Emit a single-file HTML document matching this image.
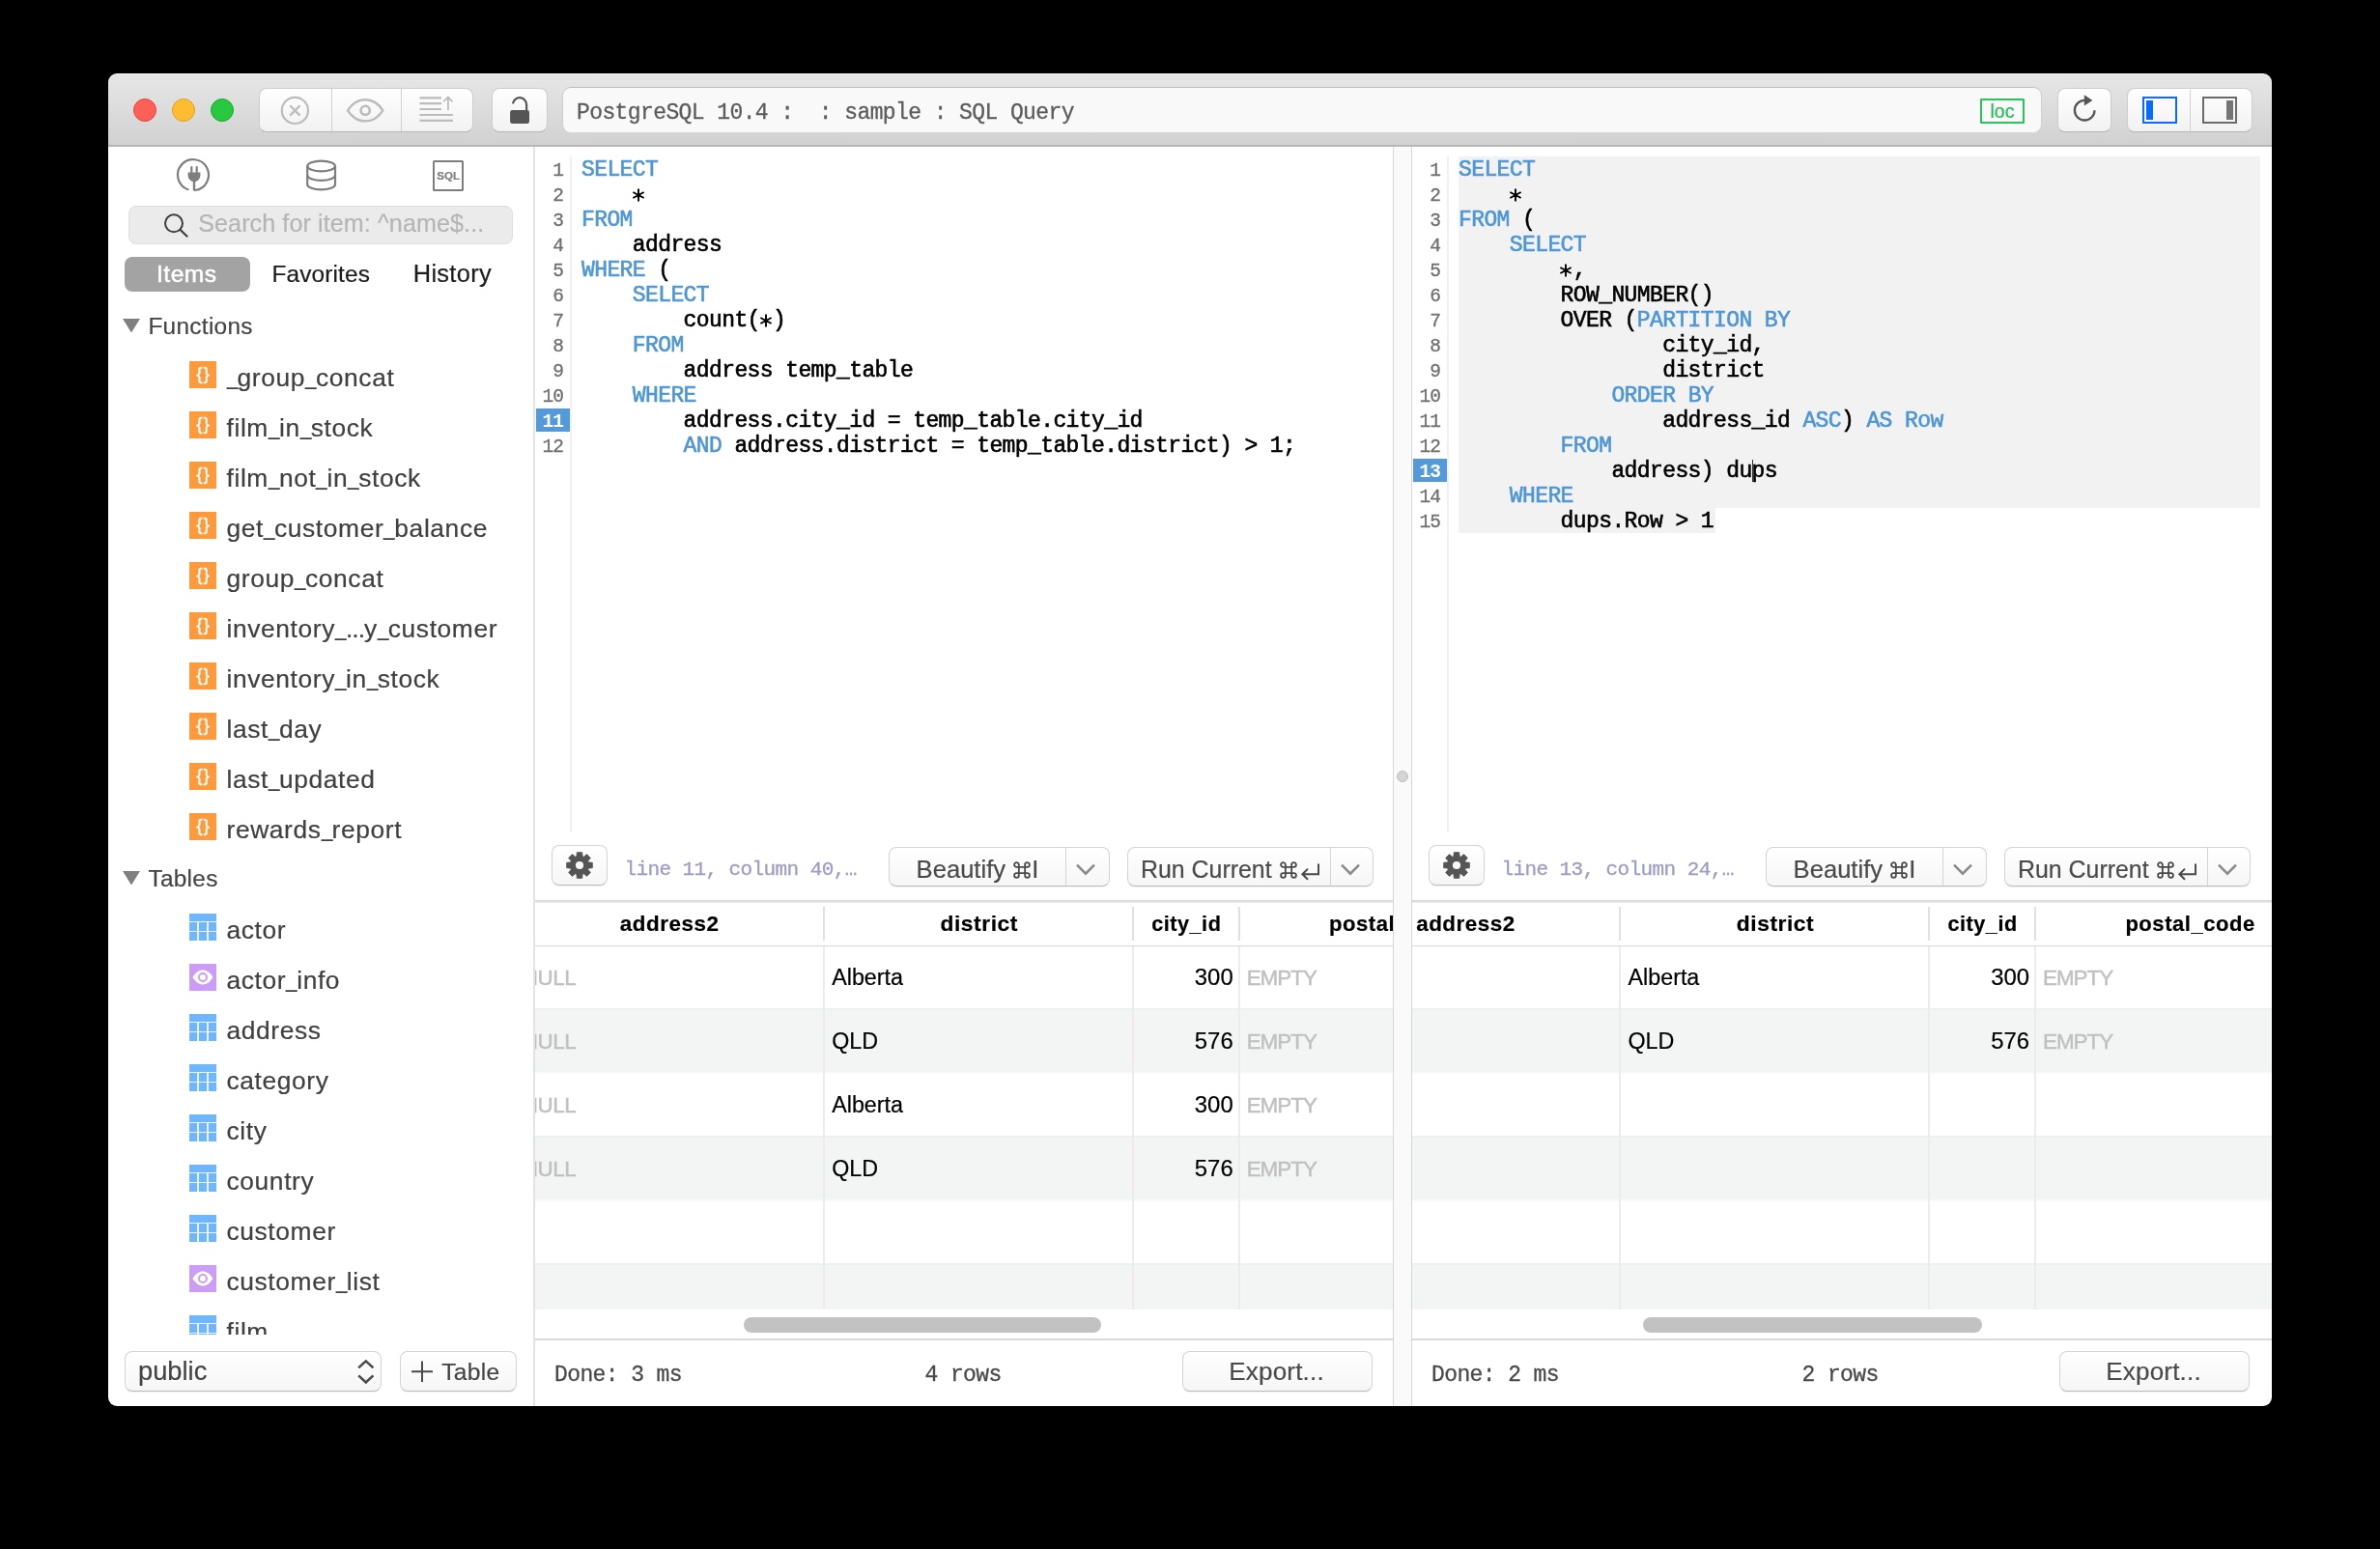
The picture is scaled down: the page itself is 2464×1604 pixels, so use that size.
<!DOCTYPE html>
<html><head><meta charset="utf-8"><title>TablePlus</title>
<style>
html,body{margin:0;padding:0;background:#000;}
html{width:2464px;height:1604px;overflow:hidden;}
body{width:2464px;height:1604px;overflow:hidden;position:relative;}
#win{position:absolute;left:0;top:0;width:2464px;height:1604px;background:#fff;overflow:hidden;
 clip-path:inset(76px 112px 148px 112px round 9px);will-change:transform;}
#win div,#win svg{position:absolute;box-sizing:border-box;}
.t{white-space:pre;line-height:1;}
.fs{font-family:"Liberation Sans",sans-serif;-webkit-text-stroke:0.2px;}
.fm{font-family:"Liberation Mono",monospace;-webkit-text-stroke:0.3px;}
.btn{background:linear-gradient(#fefefe,#f2f2f2);border:1px solid #cdcdcd;border-bottom-color:#b5b5b5;border-radius:8px;}
.btn2{background:linear-gradient(#ffffff,#f6f6f6);border:1px solid #d4d4d4;border-bottom-color:#bcbcbc;border-radius:8px;box-shadow:0 1px 1px rgba(0,0,0,.06);}
.k{color:#4e96d6;}
.u{display:inline-block;width:11px;letter-spacing:0;transform:translateY(-2.4px) scaleX(0.78);transform-origin:0 50%;}
.clip{overflow:hidden;}
</style></head><body><div id="win">
<div style="left:112px;top:76px;width:2240px;height:74px;background:linear-gradient(#e7e7e7,#d1d1d1);"></div>
<div style="left:112px;top:76px;width:2240px;height:1px;background:#f3f3f3;"></div>
<div style="left:112px;top:150px;width:2240px;height:2px;background:#b7b7b7;"></div>
<div style="left:138px;top:102px;width:24px;height:24px;border-radius:50%;background:#fe5f57;border:1px solid #e0443e;"></div>
<div style="left:178px;top:102px;width:24px;height:24px;border-radius:50%;background:#febc2e;border:1px solid #dea123;"></div>
<div style="left:218px;top:102px;width:24px;height:24px;border-radius:50%;background:#28c840;border:1px solid #1aab29;"></div>
<div class="btn" style="left:268px;top:91px;width:222px;height:46px;"></div>
<div style="left:342.5px;top:92px;width:1px;height:44px;background:#d2d2d2;"></div>
<div style="left:414.5px;top:92px;width:1px;height:44px;background:#d2d2d2;"></div>
<svg style="left:288px;top:97px;" width="36" height="36" viewBox="0 0 36 36"><circle cx="17.4" cy="17.4" r="13.6" fill="none" stroke="#bcbcbc" stroke-width="2.2"/><path d="M12.2 12.2l10.4 10.4M22.6 12.2l-10.4 10.4" stroke="#bcbcbc" stroke-width="2.2" fill="none"/></svg>
<svg style="left:358px;top:100px;" width="40" height="28" viewBox="0 0 40 28"><path d="M2 14.3C7 6.5 13 3.2 20.2 3.2S33.4 6.5 38.4 14.3C33.4 22.1 27.4 25.4 20.2 25.4S7 22.1 2 14.3Z" fill="none" stroke="#bcbcbc" stroke-width="2.4"/><circle cx="20.2" cy="14.3" r="4.6" fill="none" stroke="#bcbcbc" stroke-width="2.6"/></svg>
<svg style="left:432px;top:98px;" width="40" height="30" viewBox="0 0 40 30"><path d="M2.5 3.3h22.5M2.5 9.2h22.5M2.5 15h22.5M2.5 21h34.4M2.5 26.8h34.4" stroke="#bcbcbc" stroke-width="2.2" fill="none"/><path d="M31.9 16V3M27.3 7.2l4.6-4.6 4.6 4.6" stroke="#bcbcbc" stroke-width="1.8" fill="none"/></svg>
<div class="btn" style="left:509px;top:91px;width:57.5px;height:46px;"></div>
<svg style="left:524px;top:98px;" width="28" height="32" viewBox="0 0 28 32"><rect x="4.1" y="16" width="19.9" height="14" rx="2.2" fill="#555"/><path d="M21.1 16.5V10.3a7.1 7.1 0 0 0-14.15-0.9" fill="none" stroke="#555" stroke-width="2.2"/></svg>
<div style="left:582px;top:90px;width:1531.5px;height:47.5px;background:#f9f9f9;border:1px solid #cfcfcf;border-top-color:#bfbfbf;border-bottom-color:#d6d6d6;border-radius:9px;"></div>
<div class="t fm" style="top:106.00px;font-size:23px;color:#5c5c5c;letter-spacing:-0.6px;left:597px;">PostgreSQL 10.4 :  : sample : SQL Query</div>
<div style="left:2050px;top:102px;width:46px;height:26px;border:2px solid #27c45a;border-radius:1px;"></div>
<div class="t fs" style="top:106.00px;font-size:19.5px;color:#27bd56;left:1573px;width:1000px;text-align:center;">loc</div>
<div class="btn" style="left:2130px;top:91px;width:56px;height:46px;"></div>
<svg style="left:2142px;top:96px;" width="32" height="34" viewBox="0 0 32 34"><path d="M16.2 7.9a10.3 10.3 0 1 0 10.3 10.3" fill="none" stroke="#555" stroke-width="2.3"/><path d="M15.8 2.2v11.3l8.6-5.6z" fill="#555"/></svg>
<div class="btn" style="left:2201.5px;top:91px;width:130.5px;height:46px;"></div>
<div style="left:2266.5px;top:92.5px;width:1px;height:43px;background:#d2d2d2;"></div>
<div style="left:2218px;top:100px;width:36px;height:28px;border:2px solid #0a6cff;"></div>
<div style="left:2222px;top:104px;width:7px;height:20px;background:#0a6cff;"></div>
<div style="left:2280px;top:100px;width:36px;height:28px;border:2px solid #6b6b6b;"></div>
<div style="left:2305px;top:104px;width:7px;height:20px;background:#757575;"></div>
<div style="left:552px;top:152px;width:2px;height:1304px;background:#e3e3e3;"></div>
<svg style="left:181px;top:161px;" width="40" height="40" viewBox="0 0 40 40"><path d="M13.6 35.2A16 16 0 1 1 21 36" fill="none" stroke="#7e7e7e" stroke-width="2.2" stroke-linecap="round"/><path d="M13.6 17.6h12.8v3.2a6.4 6.4 0 0 1-12.8 0z" fill="#7e7e7e"/><path d="M17.3 12.2v6M22.7 12.2v6" stroke="#7e7e7e" stroke-width="2.2" stroke-linecap="round"/><path d="M20 26v10.4" stroke="#7e7e7e" stroke-width="2.4"/></svg>
<svg style="left:314px;top:162px;" width="38" height="38" viewBox="0 0 38 38"><ellipse cx="18.6" cy="10" rx="14.4" ry="5.4" fill="none" stroke="#7e7e7e" stroke-width="2.2"/><path d="M4.2 10v19c0 3 6.4 5.4 14.4 5.4s14.4-2.4 14.4-5.4V10" fill="none" stroke="#7e7e7e" stroke-width="2.2"/><path d="M4.2 19.4c0 3 6.4 5.4 14.4 5.4s14.4-2.4 14.4-5.4" fill="none" stroke="#7e7e7e" stroke-width="2.2"/></svg>
<div style="left:448px;top:166px;width:32px;height:31.5px;border:2.2px solid #7e7e7e;border-radius:1.5px;"></div>
<div class="t fs" style="top:176.00px;font-size:11.6px;color:#7e7e7e;font-weight:bold;left:-35.8px;width:1000px;text-align:center;">SQL</div>
<div style="left:133px;top:213px;width:398px;height:40px;background:#ebebeb;border:1px solid #dedede;border-radius:8px;"></div>
<svg style="left:166px;top:217px;" width="32" height="32" viewBox="0 0 32 32"><circle cx="14" cy="14.3" r="9" fill="none" stroke="#3d3d3d" stroke-width="2"/><path d="M20.4 20.7l7.8 7.6" stroke="#3d3d3d" stroke-width="2.2"/></svg>
<div class="t fs" style="top:219.00px;font-size:25.1px;color:#b5b5b5;letter-spacing:0.1px;left:205.2px;">Search for item: ^name$...</div>
<div style="left:129px;top:266px;width:130px;height:36px;background:#a3a3a3;border-radius:8px;"></div>
<div class="t fs" style="top:272.00px;font-size:24.6px;color:#fff;letter-spacing:0.5px;left:162px;-webkit-text-stroke:0.5px #fff;">Items</div>
<div class="t fs" style="top:272.00px;font-size:24.4px;color:#1c1c1c;letter-spacing:0.15px;left:281.4px;">Favorites</div>
<div class="t fs" style="top:271.00px;font-size:25.4px;color:#1c1c1c;letter-spacing:0.3px;left:427.8px;">History</div>
<div class="clip" style="left:112px;top:310px;width:440px;height:1072px;">
<svg style="left:15px;top:20.3px" width="18" height="15" viewBox="0 0 18 15"><path d="M0 0h18l-9 14.6z" fill="#808080"/></svg>
<div class="t fs" style="left:41.4px;top:16.00px;font-size:24.4px;color:#444;letter-spacing:0.3px;">Functions</div>
<div style="left:84px;top:64px;width:28px;height:28px;background:#ff9a3c;"></div>
<div class="t fs" style="left:84px;width:28px;text-align:center;top:69px;font-size:17.7px;color:#fff;letter-spacing:1.4px;text-indent:1.4px;-webkit-text-stroke:0.5px #fff;">{}</div>
<div class="t fs" style="left:122.5px;top:68.00px;font-size:26.4px;color:#404040;letter-spacing:0.6px;"><span class="u">_</span>group<span class="u">_</span>concat</div>
<div style="left:84px;top:116px;width:28px;height:28px;background:#ff9a3c;"></div>
<div class="t fs" style="left:84px;width:28px;text-align:center;top:121px;font-size:17.7px;color:#fff;letter-spacing:1.4px;text-indent:1.4px;-webkit-text-stroke:0.5px #fff;">{}</div>
<div class="t fs" style="left:122.5px;top:120.00px;font-size:26.4px;color:#404040;letter-spacing:0.6px;">film<span class="u">_</span>in<span class="u">_</span>stock</div>
<div style="left:84px;top:168px;width:28px;height:28px;background:#ff9a3c;"></div>
<div class="t fs" style="left:84px;width:28px;text-align:center;top:173px;font-size:17.7px;color:#fff;letter-spacing:1.4px;text-indent:1.4px;-webkit-text-stroke:0.5px #fff;">{}</div>
<div class="t fs" style="left:122.5px;top:172.00px;font-size:26.4px;color:#404040;letter-spacing:0.6px;">film<span class="u">_</span>not<span class="u">_</span>in<span class="u">_</span>stock</div>
<div style="left:84px;top:220px;width:28px;height:28px;background:#ff9a3c;"></div>
<div class="t fs" style="left:84px;width:28px;text-align:center;top:225px;font-size:17.7px;color:#fff;letter-spacing:1.4px;text-indent:1.4px;-webkit-text-stroke:0.5px #fff;">{}</div>
<div class="t fs" style="left:122.5px;top:224.00px;font-size:26.4px;color:#404040;letter-spacing:0.6px;">get<span class="u">_</span>customer<span class="u">_</span>balance</div>
<div style="left:84px;top:272px;width:28px;height:28px;background:#ff9a3c;"></div>
<div class="t fs" style="left:84px;width:28px;text-align:center;top:277px;font-size:17.7px;color:#fff;letter-spacing:1.4px;text-indent:1.4px;-webkit-text-stroke:0.5px #fff;">{}</div>
<div class="t fs" style="left:122.5px;top:276.00px;font-size:26.4px;color:#404040;letter-spacing:0.6px;">group<span class="u">_</span>concat</div>
<div style="left:84px;top:324px;width:28px;height:28px;background:#ff9a3c;"></div>
<div class="t fs" style="left:84px;width:28px;text-align:center;top:329px;font-size:17.7px;color:#fff;letter-spacing:1.4px;text-indent:1.4px;-webkit-text-stroke:0.5px #fff;">{}</div>
<div class="t fs" style="left:122.5px;top:328.00px;font-size:26.4px;color:#404040;letter-spacing:0.6px;">inventory<span class="u">_</span><span style="letter-spacing:-1px">...</span>y<span class="u">_</span>customer</div>
<div style="left:84px;top:376px;width:28px;height:28px;background:#ff9a3c;"></div>
<div class="t fs" style="left:84px;width:28px;text-align:center;top:381px;font-size:17.7px;color:#fff;letter-spacing:1.4px;text-indent:1.4px;-webkit-text-stroke:0.5px #fff;">{}</div>
<div class="t fs" style="left:122.5px;top:380.00px;font-size:26.4px;color:#404040;letter-spacing:0.6px;">inventory<span class="u">_</span>in<span class="u">_</span>stock</div>
<div style="left:84px;top:428px;width:28px;height:28px;background:#ff9a3c;"></div>
<div class="t fs" style="left:84px;width:28px;text-align:center;top:433px;font-size:17.7px;color:#fff;letter-spacing:1.4px;text-indent:1.4px;-webkit-text-stroke:0.5px #fff;">{}</div>
<div class="t fs" style="left:122.5px;top:432.00px;font-size:26.4px;color:#404040;letter-spacing:0.6px;">last<span class="u">_</span>day</div>
<div style="left:84px;top:480px;width:28px;height:28px;background:#ff9a3c;"></div>
<div class="t fs" style="left:84px;width:28px;text-align:center;top:485px;font-size:17.7px;color:#fff;letter-spacing:1.4px;text-indent:1.4px;-webkit-text-stroke:0.5px #fff;">{}</div>
<div class="t fs" style="left:122.5px;top:484.00px;font-size:26.4px;color:#404040;letter-spacing:0.6px;">last<span class="u">_</span>updated</div>
<div style="left:84px;top:532px;width:28px;height:28px;background:#ff9a3c;"></div>
<div class="t fs" style="left:84px;width:28px;text-align:center;top:537px;font-size:17.7px;color:#fff;letter-spacing:1.4px;text-indent:1.4px;-webkit-text-stroke:0.5px #fff;">{}</div>
<div class="t fs" style="left:122.5px;top:536.00px;font-size:26.4px;color:#404040;letter-spacing:0.6px;">rewards<span class="u">_</span>report</div>
<svg style="left:15px;top:592.3px" width="18" height="15" viewBox="0 0 18 15"><path d="M0 0h18l-9 14.6z" fill="#808080"/></svg>
<div class="t fs" style="left:41.4px;top:588.00px;font-size:24.4px;color:#444;letter-spacing:0.3px;">Tables</div>
<div style="left:84px;top:636px;width:28px;height:28px;background:#6fb6fc;"></div>
<div style="left:84px;top:644.1px;width:28px;height:1.4px;background:#e9f3ff;"></div>
<div style="left:84px;top:654.1px;width:28px;height:1.4px;background:#e9f3ff;"></div>
<div style="left:92.4px;top:645px;width:1.4px;height:19px;background:#e9f3ff;"></div>
<div style="left:102.2px;top:645px;width:1.4px;height:19px;background:#e9f3ff;"></div>
<div class="t fs" style="left:122.5px;top:640.00px;font-size:26.4px;color:#404040;letter-spacing:0.6px;">actor</div>
<div style="left:84px;top:688px;width:28px;height:28px;background:#cc9df7;"></div>
<svg style="left:84px;top:688px" width="28" height="28" viewBox="0 0 28 28"><path d="M3.4 14C6.8 8.8 10.2 6.6 14 6.6S21.200000000000003 8.8 24.4 14C21.2 19.2 17.8 21.4 14 21.4S6.8 19.2 3.4 14Z" fill="#fff"/><circle cx="14" cy="14" r="4" fill="none" stroke="#cc9df7" stroke-width="2"/></svg>
<div class="t fs" style="left:122.5px;top:692.00px;font-size:26.4px;color:#404040;letter-spacing:0.6px;">actor<span class="u">_</span>info</div>
<div style="left:84px;top:740px;width:28px;height:28px;background:#6fb6fc;"></div>
<div style="left:84px;top:748.1px;width:28px;height:1.4px;background:#e9f3ff;"></div>
<div style="left:84px;top:758.1px;width:28px;height:1.4px;background:#e9f3ff;"></div>
<div style="left:92.4px;top:749px;width:1.4px;height:19px;background:#e9f3ff;"></div>
<div style="left:102.2px;top:749px;width:1.4px;height:19px;background:#e9f3ff;"></div>
<div class="t fs" style="left:122.5px;top:744.00px;font-size:26.4px;color:#404040;letter-spacing:0.6px;">address</div>
<div style="left:84px;top:792px;width:28px;height:28px;background:#6fb6fc;"></div>
<div style="left:84px;top:800.1px;width:28px;height:1.4px;background:#e9f3ff;"></div>
<div style="left:84px;top:810.1px;width:28px;height:1.4px;background:#e9f3ff;"></div>
<div style="left:92.4px;top:801px;width:1.4px;height:19px;background:#e9f3ff;"></div>
<div style="left:102.2px;top:801px;width:1.4px;height:19px;background:#e9f3ff;"></div>
<div class="t fs" style="left:122.5px;top:796.00px;font-size:26.4px;color:#404040;letter-spacing:0.6px;">category</div>
<div style="left:84px;top:844px;width:28px;height:28px;background:#6fb6fc;"></div>
<div style="left:84px;top:852.1px;width:28px;height:1.4px;background:#e9f3ff;"></div>
<div style="left:84px;top:862.1px;width:28px;height:1.4px;background:#e9f3ff;"></div>
<div style="left:92.4px;top:853px;width:1.4px;height:19px;background:#e9f3ff;"></div>
<div style="left:102.2px;top:853px;width:1.4px;height:19px;background:#e9f3ff;"></div>
<div class="t fs" style="left:122.5px;top:848.00px;font-size:26.4px;color:#404040;letter-spacing:0.6px;">city</div>
<div style="left:84px;top:896px;width:28px;height:28px;background:#6fb6fc;"></div>
<div style="left:84px;top:904.1px;width:28px;height:1.4px;background:#e9f3ff;"></div>
<div style="left:84px;top:914.1px;width:28px;height:1.4px;background:#e9f3ff;"></div>
<div style="left:92.4px;top:905px;width:1.4px;height:19px;background:#e9f3ff;"></div>
<div style="left:102.2px;top:905px;width:1.4px;height:19px;background:#e9f3ff;"></div>
<div class="t fs" style="left:122.5px;top:900.00px;font-size:26.4px;color:#404040;letter-spacing:0.6px;">country</div>
<div style="left:84px;top:948px;width:28px;height:28px;background:#6fb6fc;"></div>
<div style="left:84px;top:956.1px;width:28px;height:1.4px;background:#e9f3ff;"></div>
<div style="left:84px;top:966.1px;width:28px;height:1.4px;background:#e9f3ff;"></div>
<div style="left:92.4px;top:957px;width:1.4px;height:19px;background:#e9f3ff;"></div>
<div style="left:102.2px;top:957px;width:1.4px;height:19px;background:#e9f3ff;"></div>
<div class="t fs" style="left:122.5px;top:952.00px;font-size:26.4px;color:#404040;letter-spacing:0.6px;">customer</div>
<div style="left:84px;top:1000px;width:28px;height:28px;background:#cc9df7;"></div>
<svg style="left:84px;top:1000px" width="28" height="28" viewBox="0 0 28 28"><path d="M3.4 14C6.8 8.8 10.2 6.6 14 6.6S21.200000000000003 8.8 24.4 14C21.2 19.2 17.8 21.4 14 21.4S6.8 19.2 3.4 14Z" fill="#fff"/><circle cx="14" cy="14" r="4" fill="none" stroke="#cc9df7" stroke-width="2"/></svg>
<div class="t fs" style="left:122.5px;top:1004.00px;font-size:26.4px;color:#404040;letter-spacing:0.6px;">customer<span class="u">_</span>list</div>
<div style="left:84px;top:1052px;width:28px;height:28px;background:#6fb6fc;"></div>
<div style="left:84px;top:1060.1px;width:28px;height:1.4px;background:#e9f3ff;"></div>
<div style="left:84px;top:1070.1px;width:28px;height:1.4px;background:#e9f3ff;"></div>
<div style="left:92.4px;top:1061px;width:1.4px;height:19px;background:#e9f3ff;"></div>
<div style="left:102.2px;top:1061px;width:1.4px;height:19px;background:#e9f3ff;"></div>
<div class="t fs" style="left:122.5px;top:1056.00px;font-size:26.4px;color:#404040;letter-spacing:0.6px;">film</div>
</div>
<div class="btn2" style="left:129px;top:1399px;width:266px;height:41.5px;"></div>
<div class="t fs" style="top:1406.00px;font-size:27.3px;color:#444;left:143px;">public</div>
<svg style="left:368px;top:1405px;" width="22" height="30" viewBox="0 0 22 30"><path d="M3.2 11.4l7.6-7 7.6 7M3.2 19.4l7.6 7 7.6-7" fill="none" stroke="#4a4a4a" stroke-width="2.6"/></svg>
<div class="btn2" style="left:413.5px;top:1399px;width:121px;height:41.5px;"></div>
<svg style="left:424px;top:1408px;" width="26" height="26" viewBox="0 0 26 26"><path d="M13 1.4v21.6M2 12.2h22" stroke="#4a4a4a" stroke-width="2" fill="none"/></svg>
<div class="t fs" style="top:1409.00px;font-size:24.6px;color:#444;letter-spacing:0.3px;left:457.2px;">Table</div>
<div style="left:1442px;top:152px;width:1.3px;height:1304px;background:#d6d6d6;"></div>
<div style="left:1443.3px;top:152px;width:17.4px;height:1304px;background:#fafafa;"></div>
<div style="left:1460.7px;top:152px;width:1.3px;height:1304px;background:#d6d6d6;"></div>
<div style="left:1446px;top:798px;width:12px;height:12px;border-radius:50%;background:radial-gradient(#d8d8d8,#cfcfcf);border:1px solid #bdbdbd;"></div>
<div style="left:590px;top:162px;width:2px;height:699px;background:#f0f0f0;"></div>
<div class="t fm" style="top:168.00px;font-size:19.5px;color:#707070;letter-spacing:-0.9px;right:1881px;">1</div>
<div class="t fm" style="top:165.00px;font-size:23px;color:#000;letter-spacing:-0.602246px;left:602px;-webkit-text-stroke:0.6px;"><span class="k">SELECT</span></div>
<div class="t fm" style="top:194.00px;font-size:19.5px;color:#707070;letter-spacing:-0.9px;right:1881px;">2</div>
<svg style="left:651.6px;top:192.6px;" width="18" height="18" viewBox="-9 -9 18 18"><path d="M0 0L0.00 -6.40M0 0L5.65 -3.00M0 0L5.65 3.00M0 0L0.00 6.40M0 0L-5.65 3.00M0 0L-5.65 -3.00" stroke="#000" stroke-width="1.9" fill="none"/></svg>
<div class="t fm" style="top:191.00px;font-size:23px;color:#000;letter-spacing:-0.602246px;left:602px;-webkit-text-stroke:0.6px;">     </div>
<div class="t fm" style="top:220.00px;font-size:19.5px;color:#707070;letter-spacing:-0.9px;right:1881px;">3</div>
<div class="t fm" style="top:217.00px;font-size:23px;color:#000;letter-spacing:-0.602246px;left:602px;-webkit-text-stroke:0.6px;"><span class="k">FROM</span></div>
<div class="t fm" style="top:246.00px;font-size:19.5px;color:#707070;letter-spacing:-0.9px;right:1881px;">4</div>
<div class="t fm" style="top:243.00px;font-size:23px;color:#000;letter-spacing:-0.602246px;left:602px;-webkit-text-stroke:0.6px;">    address</div>
<div class="t fm" style="top:272.00px;font-size:19.5px;color:#707070;letter-spacing:-0.9px;right:1881px;">5</div>
<div class="t fm" style="top:269.00px;font-size:23px;color:#000;letter-spacing:-0.602246px;left:602px;-webkit-text-stroke:0.6px;"><span class="k">WHERE</span> (</div>
<div class="t fm" style="top:298.00px;font-size:19.5px;color:#707070;letter-spacing:-0.9px;right:1881px;">6</div>
<div class="t fm" style="top:295.00px;font-size:23px;color:#000;letter-spacing:-0.602246px;left:602px;-webkit-text-stroke:0.6px;">    <span class="k">SELECT</span></div>
<div class="t fm" style="top:324.00px;font-size:19.5px;color:#707070;letter-spacing:-0.9px;right:1881px;">7</div>
<svg style="left:783.6px;top:322.6px;" width="18" height="18" viewBox="-9 -9 18 18"><path d="M0 0L0.00 -6.40M0 0L5.65 -3.00M0 0L5.65 3.00M0 0L0.00 6.40M0 0L-5.65 3.00M0 0L-5.65 -3.00" stroke="#000" stroke-width="1.9" fill="none"/></svg>
<div class="t fm" style="top:321.00px;font-size:23px;color:#000;letter-spacing:-0.602246px;left:602px;-webkit-text-stroke:0.6px;">        count( )</div>
<div class="t fm" style="top:350.00px;font-size:19.5px;color:#707070;letter-spacing:-0.9px;right:1881px;">8</div>
<div class="t fm" style="top:347.00px;font-size:23px;color:#000;letter-spacing:-0.602246px;left:602px;-webkit-text-stroke:0.6px;">    <span class="k">FROM</span></div>
<div class="t fm" style="top:376.00px;font-size:19.5px;color:#707070;letter-spacing:-0.9px;right:1881px;">9</div>
<div class="t fm" style="top:373.00px;font-size:23px;color:#000;letter-spacing:-0.602246px;left:602px;-webkit-text-stroke:0.6px;">        address temp_table</div>
<div class="t fm" style="top:402.00px;font-size:19.5px;color:#707070;letter-spacing:-0.9px;right:1881px;">10</div>
<div class="t fm" style="top:399.00px;font-size:23px;color:#000;letter-spacing:-0.602246px;left:602px;-webkit-text-stroke:0.6px;">    <span class="k">WHERE</span></div>
<div style="left:555px;top:423px;width:35px;height:24px;background:#529ad9;"></div>
<div class="t fm" style="top:428.00px;font-size:19.5px;color:#fff;font-weight:bold;letter-spacing:-0.9px;right:1881px;-webkit-text-stroke:0;">11</div>
<div class="t fm" style="top:425.00px;font-size:23px;color:#000;letter-spacing:-0.602246px;left:602px;-webkit-text-stroke:0.6px;">        address.city_id = temp_table.city_id</div>
<div class="t fm" style="top:454.00px;font-size:19.5px;color:#707070;letter-spacing:-0.9px;right:1881px;">12</div>
<div class="t fm" style="top:451.00px;font-size:23px;color:#000;letter-spacing:-0.602246px;left:602px;-webkit-text-stroke:0.6px;">        <span class="k">AND</span> address.district = temp_table.district) &gt; 1;</div>
<div style="left:1510px;top:162px;width:830px;height:364px;background:#f2f2f2;"></div>
<div style="left:1510px;top:526px;width:265.5px;height:26px;background:#f2f2f2;"></div>
<div style="left:1498px;top:162px;width:2px;height:699px;background:#f0f0f0;"></div>
<div class="t fm" style="top:168.00px;font-size:19.5px;color:#707070;letter-spacing:-0.9px;right:973px;">1</div>
<div class="t fm" style="top:165.00px;font-size:23px;color:#000;letter-spacing:-0.602246px;left:1510px;-webkit-text-stroke:0.6px;"><span class="k">SELECT</span></div>
<div class="t fm" style="top:194.00px;font-size:19.5px;color:#707070;letter-spacing:-0.9px;right:973px;">2</div>
<svg style="left:1559.6px;top:192.6px;" width="18" height="18" viewBox="-9 -9 18 18"><path d="M0 0L0.00 -6.40M0 0L5.65 -3.00M0 0L5.65 3.00M0 0L0.00 6.40M0 0L-5.65 3.00M0 0L-5.65 -3.00" stroke="#000" stroke-width="1.9" fill="none"/></svg>
<div class="t fm" style="top:191.00px;font-size:23px;color:#000;letter-spacing:-0.602246px;left:1510px;-webkit-text-stroke:0.6px;">     </div>
<div class="t fm" style="top:220.00px;font-size:19.5px;color:#707070;letter-spacing:-0.9px;right:973px;">3</div>
<div class="t fm" style="top:217.00px;font-size:23px;color:#000;letter-spacing:-0.602246px;left:1510px;-webkit-text-stroke:0.6px;"><span class="k">FROM</span> (</div>
<div class="t fm" style="top:246.00px;font-size:19.5px;color:#707070;letter-spacing:-0.9px;right:973px;">4</div>
<div class="t fm" style="top:243.00px;font-size:23px;color:#000;letter-spacing:-0.602246px;left:1510px;-webkit-text-stroke:0.6px;">    <span class="k">SELECT</span></div>
<div class="t fm" style="top:272.00px;font-size:19.5px;color:#707070;letter-spacing:-0.9px;right:973px;">5</div>
<svg style="left:1612.4px;top:270.6px;" width="18" height="18" viewBox="-9 -9 18 18"><path d="M0 0L0.00 -6.40M0 0L5.65 -3.00M0 0L5.65 3.00M0 0L0.00 6.40M0 0L-5.65 3.00M0 0L-5.65 -3.00" stroke="#000" stroke-width="1.9" fill="none"/></svg>
<div class="t fm" style="top:269.00px;font-size:23px;color:#000;letter-spacing:-0.602246px;left:1510px;-webkit-text-stroke:0.6px;">         ,</div>
<div class="t fm" style="top:298.00px;font-size:19.5px;color:#707070;letter-spacing:-0.9px;right:973px;">6</div>
<div class="t fm" style="top:295.00px;font-size:23px;color:#000;letter-spacing:-0.602246px;left:1510px;-webkit-text-stroke:0.6px;">        ROW_NUMBER()</div>
<div class="t fm" style="top:324.00px;font-size:19.5px;color:#707070;letter-spacing:-0.9px;right:973px;">7</div>
<div class="t fm" style="top:321.00px;font-size:23px;color:#000;letter-spacing:-0.602246px;left:1510px;-webkit-text-stroke:0.6px;">        OVER (<span class="k">PARTITION</span> <span class="k">BY</span></div>
<div class="t fm" style="top:350.00px;font-size:19.5px;color:#707070;letter-spacing:-0.9px;right:973px;">8</div>
<div class="t fm" style="top:347.00px;font-size:23px;color:#000;letter-spacing:-0.602246px;left:1510px;-webkit-text-stroke:0.6px;">                city_id,</div>
<div class="t fm" style="top:376.00px;font-size:19.5px;color:#707070;letter-spacing:-0.9px;right:973px;">9</div>
<div class="t fm" style="top:373.00px;font-size:23px;color:#000;letter-spacing:-0.602246px;left:1510px;-webkit-text-stroke:0.6px;">                district</div>
<div class="t fm" style="top:402.00px;font-size:19.5px;color:#707070;letter-spacing:-0.9px;right:973px;">10</div>
<div class="t fm" style="top:399.00px;font-size:23px;color:#000;letter-spacing:-0.602246px;left:1510px;-webkit-text-stroke:0.6px;">            <span class="k">ORDER</span> <span class="k">BY</span></div>
<div class="t fm" style="top:428.00px;font-size:19.5px;color:#707070;letter-spacing:-0.9px;right:973px;">11</div>
<div class="t fm" style="top:425.00px;font-size:23px;color:#000;letter-spacing:-0.602246px;left:1510px;-webkit-text-stroke:0.6px;">                address_id <span class="k">ASC</span>) <span class="k">AS</span> <span class="k">Row</span></div>
<div class="t fm" style="top:454.00px;font-size:19.5px;color:#707070;letter-spacing:-0.9px;right:973px;">12</div>
<div class="t fm" style="top:451.00px;font-size:23px;color:#000;letter-spacing:-0.602246px;left:1510px;-webkit-text-stroke:0.6px;">        <span class="k">FROM</span></div>
<div style="left:1463px;top:475px;width:35px;height:24px;background:#529ad9;"></div>
<div class="t fm" style="top:480.00px;font-size:19.5px;color:#fff;font-weight:bold;letter-spacing:-0.9px;right:973px;-webkit-text-stroke:0;">13</div>
<div class="t fm" style="top:477.00px;font-size:23px;color:#000;letter-spacing:-0.602246px;left:1510px;-webkit-text-stroke:0.6px;">            address) dups</div>
<div class="t fm" style="top:506.00px;font-size:19.5px;color:#707070;letter-spacing:-0.9px;right:973px;">14</div>
<div class="t fm" style="top:503.00px;font-size:23px;color:#000;letter-spacing:-0.602246px;left:1510px;-webkit-text-stroke:0.6px;">    <span class="k">WHERE</span></div>
<div class="t fm" style="top:532.00px;font-size:19.5px;color:#707070;letter-spacing:-0.9px;right:973px;">15</div>
<div class="t fm" style="top:529.00px;font-size:23px;color:#000;letter-spacing:-0.602246px;left:1510px;-webkit-text-stroke:0.6px;">        dups.Row &gt; 1</div>
<div style="left:1813.8px;top:475.5px;width:1.6px;height:23.5px;background:#333;"></div>
<div class="btn2" style="left:571px;top:875px;width:58px;height:41.5px;"></div>
<svg style="left:584px;top:880px;" width="32" height="32" viewBox="0 0 32 32"><path d="M12.86 6.82L13.28 2.57L18.72 2.57L19.14 6.82L20.27 7.29L23.57 4.58L27.42 8.43L24.71 11.73L25.18 12.86L29.43 13.28L29.43 18.72L25.18 19.14L24.71 20.27L27.42 23.57L23.57 27.42L20.27 24.71L19.14 25.18L18.72 29.43L13.28 29.43L12.86 25.18L11.73 24.71L8.43 27.42L4.58 23.57L7.29 20.27L6.82 19.14L2.57 18.72L2.57 13.28L6.82 12.86L7.29 11.73L4.58 8.43L8.43 4.58L11.73 7.29Z" fill="#555" stroke="#555" stroke-width="0.7" stroke-linejoin="round"/><circle cx="16" cy="16" r="4.1" fill="#f8f8f8"/></svg>
<div class="t fm" style="top:890.00px;font-size:21px;color:#9c9cc8;letter-spacing:-0.6px;left:646.6px;">line 11, column 40,…</div>
<div class="btn2" style="left:919.5px;top:877.3px;width:229px;height:41.2px;"></div>
<div style="left:1102.5px;top:878.3px;width:1px;height:39.2px;background:#d4d4d4;"></div>
<div class="t fs" style="left:948.6px;top:888px;font-size:25.6px;color:#4a4a4a;">Beautify <svg style="position:static;vertical-align:-2px" width="20" height="20" viewBox="0 0 21 21"><path d="M7.2 7.2h6.6v6.6H7.2zM7.2 7.2H4.7a2.5 2.5 0 1 1 2.5-2.5zM13.8 7.2V4.7a2.5 2.5 0 1 1 2.5 2.5zM13.8 13.8h2.5a2.5 2.5 0 1 1-2.5 2.5zM7.2 13.8v2.5a2.5 2.5 0 1 1-2.5-2.5z" fill="none" stroke="#4a4a4a" stroke-width="1.9"/></svg>I</div>
<svg style="left:1112px;top:891px;" width="24" height="18" viewBox="0 0 24 18"><path d="M3 4.6l9 9 9-9" fill="none" stroke="#8a8a8a" stroke-width="2.6"/></svg>
<div class="btn2" style="left:1167.3px;top:877.3px;width:255.2px;height:41.2px;"></div>
<div style="left:1376.5px;top:878.3px;width:1px;height:39.2px;background:#d4d4d4;"></div>
<div class="t fs" style="left:1181px;top:888px;font-size:24.9px;color:#4a4a4a;">Run Current <svg style="position:static;vertical-align:-2px" width="20" height="20" viewBox="0 0 21 21"><path d="M7.2 7.2h6.6v6.6H7.2zM7.2 7.2H4.7a2.5 2.5 0 1 1 2.5-2.5zM13.8 7.2V4.7a2.5 2.5 0 1 1 2.5 2.5zM13.8 13.8h2.5a2.5 2.5 0 1 1-2.5 2.5zM7.2 13.8v2.5a2.5 2.5 0 1 1-2.5-2.5z" fill="none" stroke="#4a4a4a" stroke-width="1.9"/></svg><svg style="position:static;vertical-align:-5px;margin-left:2px" width="21" height="21" viewBox="0 0 21 21"><path d="M19 1.6v10.6H2.6M8 6.6l-5.6 5.6 5.6 5.6" fill="none" stroke="#4a4a4a" stroke-width="2"/></svg></div>
<svg style="left:1386px;top:891px;" width="24" height="18" viewBox="0 0 24 18"><path d="M3 4.6l9 9 9-9" fill="none" stroke="#8a8a8a" stroke-width="2.6"/></svg>
<div class="clip" style="left:554px;top:932px;width:888px;height:456px;">
<div style="left:0;top:0;width:888px;height:2px;background:#dcdcdc;"></div><div style="left:0;top:2px;width:888px;height:1px;background:#ededed;"></div>
<div style="left:0;top:46.8px;width:888px;height:1.4px;background:#d6d6d6;"></div>
<div style="left:0;top:112px;width:888px;height:66px;background:#f3f5f5;border-top:2px solid #eeefef;"></div>
<div style="left:0;top:178px;width:888px;height:2px;background:#f8f9f9;"></div>
<div style="left:0;top:244px;width:888px;height:66px;background:#f3f5f5;border-top:2px solid #eeefef;"></div>
<div style="left:0;top:310px;width:888px;height:2px;background:#f8f9f9;"></div>
<div style="left:0;top:376px;width:888px;height:48px;background:#f3f5f5;border-top:2px solid #eeefef;"></div>
<div style="left:298px;top:7px;width:2px;height:35px;background:#e0e0e0;"></div>
<div style="left:298px;top:48px;width:2px;height:376px;background:#ececec;"></div>
<div style="left:618px;top:7px;width:2px;height:35px;background:#e0e0e0;"></div>
<div style="left:618px;top:48px;width:2px;height:376px;background:#ececec;"></div>
<div style="left:728px;top:7px;width:2px;height:35px;background:#e0e0e0;"></div>
<div style="left:728px;top:48px;width:2px;height:376px;background:#ececec;"></div>
<div class="t fs" style="left:-160.8px;width:600px;text-align:center;top:14px;font-size:22.4px;font-weight:bold;color:#000;letter-spacing:0.55px;">address2</div>
<div class="t fs" style="left:159.7px;width:600px;text-align:center;top:13px;font-size:22.8px;font-weight:bold;color:#000;letter-spacing:0.55px;">district</div>
<div class="t fs" style="left:374.3px;width:600px;text-align:center;top:14px;font-size:21.6px;font-weight:bold;color:#000;letter-spacing:0.55px;">city_id</div>
<div class="t fs" style="left:589.3px;width:600px;text-align:center;top:14px;font-size:22px;font-weight:bold;color:#000;letter-spacing:0.55px;">postal_code</div>
<div class="t fs" style="left:-13.3px;top:70px;font-size:22.4px;color:#c0c0c0;letter-spacing:-0.4px;-webkit-text-stroke:0.45px;">NULL</div>
<div class="t fs" style="left:307.2px;top:69px;font-size:23.3px;color:#000;">Alberta</div>
<div class="t fs" style="right:165.3px;top:68px;font-size:23.9px;color:#000;">300</div>
<div class="t fs" style="left:736.7px;top:70px;font-size:22.4px;color:#c0c0c0;letter-spacing:-1px;-webkit-text-stroke:0.45px;">EMPTY</div>
<div class="t fs" style="left:-13.3px;top:136px;font-size:22.4px;color:#c0c0c0;letter-spacing:-0.4px;-webkit-text-stroke:0.45px;">NULL</div>
<div class="t fs" style="left:307.2px;top:135px;font-size:23.3px;color:#000;">QLD</div>
<div class="t fs" style="right:165.3px;top:134px;font-size:23.9px;color:#000;">576</div>
<div class="t fs" style="left:736.7px;top:136px;font-size:22.4px;color:#c0c0c0;letter-spacing:-1px;-webkit-text-stroke:0.45px;">EMPTY</div>
<div class="t fs" style="left:-13.3px;top:202px;font-size:22.4px;color:#c0c0c0;letter-spacing:-0.4px;-webkit-text-stroke:0.45px;">NULL</div>
<div class="t fs" style="left:307.2px;top:201px;font-size:23.3px;color:#000;">Alberta</div>
<div class="t fs" style="right:165.3px;top:200px;font-size:23.9px;color:#000;">300</div>
<div class="t fs" style="left:736.7px;top:202px;font-size:22.4px;color:#c0c0c0;letter-spacing:-1px;-webkit-text-stroke:0.45px;">EMPTY</div>
<div class="t fs" style="left:-13.3px;top:268px;font-size:22.4px;color:#c0c0c0;letter-spacing:-0.4px;-webkit-text-stroke:0.45px;">NULL</div>
<div class="t fs" style="left:307.2px;top:267px;font-size:23.3px;color:#000;">QLD</div>
<div class="t fs" style="right:165.3px;top:266px;font-size:23.9px;color:#000;">576</div>
<div class="t fs" style="left:736.7px;top:268px;font-size:22.4px;color:#c0c0c0;letter-spacing:-1px;-webkit-text-stroke:0.45px;">EMPTY</div>
<div style="left:216px;top:432px;width:370px;height:15.5px;border-radius:8px;background:#c2c2c2;"></div>
<div style="left:0;top:454px;width:888px;height:2px;background:#d9d9d9;"></div>
</div>
<div class="t fm" style="top:1413.00px;font-size:23px;color:#4a4a4a;letter-spacing:-0.6px;left:574px;">Done: 3 ms</div>
<div class="t fm" style="top:1413.00px;font-size:23px;color:#4a4a4a;letter-spacing:-0.6px;left:957.5px;">4 rows</div>
<div class="btn2" style="left:1223.5px;top:1399px;width:197px;height:41.5px;"></div>
<div class="t fs" style="top:1407.00px;font-size:26px;color:#4a4a4a;letter-spacing:0.2px;left:821.6px;width:1000px;text-align:center;">Export...</div>
<div class="btn2" style="left:1479px;top:875px;width:58px;height:41.5px;"></div>
<svg style="left:1492px;top:880px;" width="32" height="32" viewBox="0 0 32 32"><path d="M12.86 6.82L13.28 2.57L18.72 2.57L19.14 6.82L20.27 7.29L23.57 4.58L27.42 8.43L24.71 11.73L25.18 12.86L29.43 13.28L29.43 18.72L25.18 19.14L24.71 20.27L27.42 23.57L23.57 27.42L20.27 24.71L19.14 25.18L18.72 29.43L13.28 29.43L12.86 25.18L11.73 24.71L8.43 27.42L4.58 23.57L7.29 20.27L6.82 19.14L2.57 18.72L2.57 13.28L6.82 12.86L7.29 11.73L4.58 8.43L8.43 4.58L11.73 7.29Z" fill="#555" stroke="#555" stroke-width="0.7" stroke-linejoin="round"/><circle cx="16" cy="16" r="4.1" fill="#f8f8f8"/></svg>
<div class="t fm" style="top:890.00px;font-size:21px;color:#9c9cc8;letter-spacing:-0.6px;left:1554.6px;">line 13, column 24,…</div>
<div class="btn2" style="left:1827.5px;top:877.3px;width:229px;height:41.2px;"></div>
<div style="left:2010.5px;top:878.3px;width:1px;height:39.2px;background:#d4d4d4;"></div>
<div class="t fs" style="left:1856.6px;top:888px;font-size:25.6px;color:#4a4a4a;">Beautify <svg style="position:static;vertical-align:-2px" width="20" height="20" viewBox="0 0 21 21"><path d="M7.2 7.2h6.6v6.6H7.2zM7.2 7.2H4.7a2.5 2.5 0 1 1 2.5-2.5zM13.8 7.2V4.7a2.5 2.5 0 1 1 2.5 2.5zM13.8 13.8h2.5a2.5 2.5 0 1 1-2.5 2.5zM7.2 13.8v2.5a2.5 2.5 0 1 1-2.5-2.5z" fill="none" stroke="#4a4a4a" stroke-width="1.9"/></svg>I</div>
<svg style="left:2020px;top:891px;" width="24" height="18" viewBox="0 0 24 18"><path d="M3 4.6l9 9 9-9" fill="none" stroke="#8a8a8a" stroke-width="2.6"/></svg>
<div class="btn2" style="left:2075.3px;top:877.3px;width:255.2px;height:41.2px;"></div>
<div style="left:2284.5px;top:878.3px;width:1px;height:39.2px;background:#d4d4d4;"></div>
<div class="t fs" style="left:2089px;top:888px;font-size:24.9px;color:#4a4a4a;">Run Current <svg style="position:static;vertical-align:-2px" width="20" height="20" viewBox="0 0 21 21"><path d="M7.2 7.2h6.6v6.6H7.2zM7.2 7.2H4.7a2.5 2.5 0 1 1 2.5-2.5zM13.8 7.2V4.7a2.5 2.5 0 1 1 2.5 2.5zM13.8 13.8h2.5a2.5 2.5 0 1 1-2.5 2.5zM7.2 13.8v2.5a2.5 2.5 0 1 1-2.5-2.5z" fill="none" stroke="#4a4a4a" stroke-width="1.9"/></svg><svg style="position:static;vertical-align:-5px;margin-left:2px" width="21" height="21" viewBox="0 0 21 21"><path d="M19 1.6v10.6H2.6M8 6.6l-5.6 5.6 5.6 5.6" fill="none" stroke="#4a4a4a" stroke-width="2"/></svg></div>
<svg style="left:2294px;top:891px;" width="24" height="18" viewBox="0 0 24 18"><path d="M3 4.6l9 9 9-9" fill="none" stroke="#8a8a8a" stroke-width="2.6"/></svg>
<div class="clip" style="left:1462px;top:932px;width:890px;height:456px;">
<div style="left:0;top:0;width:890px;height:2px;background:#dcdcdc;"></div><div style="left:0;top:2px;width:890px;height:1px;background:#ededed;"></div>
<div style="left:0;top:46.8px;width:890px;height:1.4px;background:#d6d6d6;"></div>
<div style="left:0;top:112px;width:890px;height:66px;background:#f3f5f5;border-top:2px solid #eeefef;"></div>
<div style="left:0;top:178px;width:890px;height:2px;background:#f8f9f9;"></div>
<div style="left:0;top:244px;width:890px;height:66px;background:#f3f5f5;border-top:2px solid #eeefef;"></div>
<div style="left:0;top:310px;width:890px;height:2px;background:#f8f9f9;"></div>
<div style="left:0;top:376px;width:890px;height:48px;background:#f3f5f5;border-top:2px solid #eeefef;"></div>
<div style="left:214.3px;top:7px;width:2px;height:35px;background:#e0e0e0;"></div>
<div style="left:214.3px;top:48px;width:2px;height:376px;background:#ececec;"></div>
<div style="left:534.3px;top:7px;width:2px;height:35px;background:#e0e0e0;"></div>
<div style="left:534.3px;top:48px;width:2px;height:376px;background:#ececec;"></div>
<div style="left:644.3px;top:7px;width:2px;height:35px;background:#e0e0e0;"></div>
<div style="left:644.3px;top:48px;width:2px;height:376px;background:#ececec;"></div>
<div class="t fs" style="left:-244.5px;width:600px;text-align:center;top:14px;font-size:22.4px;font-weight:bold;color:#000;letter-spacing:0.55px;">address2</div>
<div class="t fs" style="left:76px;width:600px;text-align:center;top:13px;font-size:22.8px;font-weight:bold;color:#000;letter-spacing:0.55px;">district</div>
<div class="t fs" style="left:290.6px;width:600px;text-align:center;top:14px;font-size:21.6px;font-weight:bold;color:#000;letter-spacing:0.55px;">city_id</div>
<div class="t fs" style="left:505.6px;width:600px;text-align:center;top:14px;font-size:22px;font-weight:bold;color:#000;letter-spacing:0.55px;">postal_code</div>
<div class="t fs" style="left:223.5px;top:69px;font-size:23.3px;color:#000;">Alberta</div>
<div class="t fs" style="right:251px;top:68px;font-size:23.9px;color:#000;">300</div>
<div class="t fs" style="left:653px;top:70px;font-size:22.4px;color:#c0c0c0;letter-spacing:-1px;-webkit-text-stroke:0.45px;">EMPTY</div>
<div class="t fs" style="left:223.5px;top:135px;font-size:23.3px;color:#000;">QLD</div>
<div class="t fs" style="right:251px;top:134px;font-size:23.9px;color:#000;">576</div>
<div class="t fs" style="left:653px;top:136px;font-size:22.4px;color:#c0c0c0;letter-spacing:-1px;-webkit-text-stroke:0.45px;">EMPTY</div>
<div style="left:239.3px;top:432px;width:350.7px;height:15.5px;border-radius:8px;background:#c2c2c2;"></div>
<div style="left:0;top:454px;width:890px;height:2px;background:#d9d9d9;"></div>
</div>
<div class="t fm" style="top:1413.00px;font-size:23px;color:#4a4a4a;letter-spacing:-0.6px;left:1482px;">Done: 2 ms</div>
<div class="t fm" style="top:1413.00px;font-size:23px;color:#4a4a4a;letter-spacing:-0.6px;left:1865.5px;">2 rows</div>
<div class="btn2" style="left:2131.5px;top:1399px;width:197px;height:41.5px;"></div>
<div class="t fs" style="top:1407.00px;font-size:26px;color:#4a4a4a;letter-spacing:0.2px;left:1729.6px;width:1000px;text-align:center;">Export...</div>
</div></body></html>
